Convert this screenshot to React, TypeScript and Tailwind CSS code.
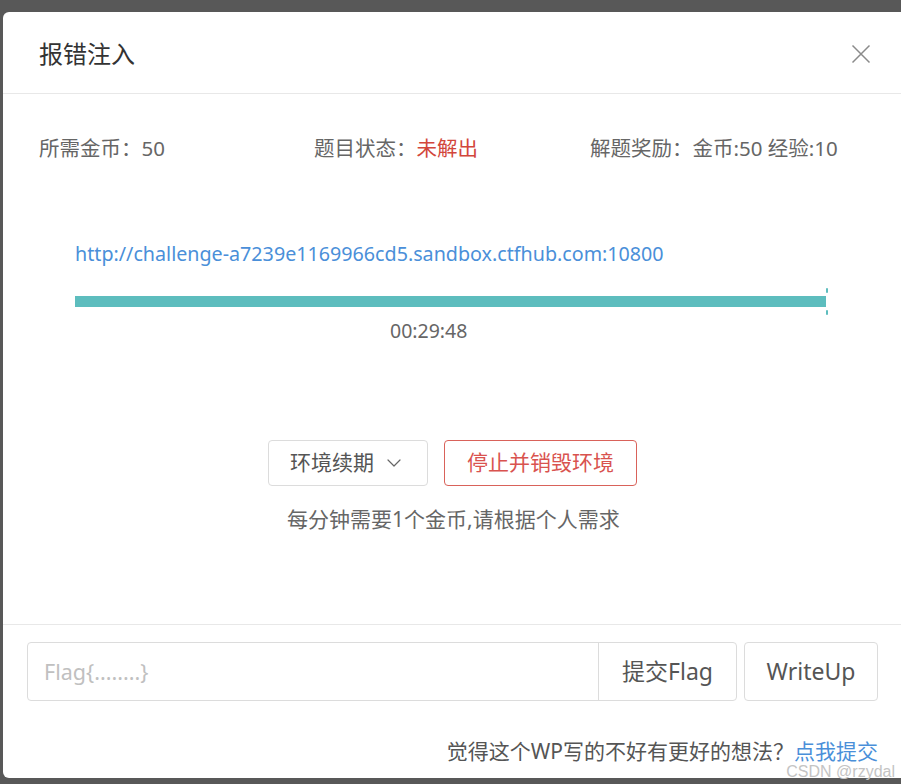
import { ChevronDown } from 'lucide-react'

const font = { fontFamily: '"Noto Sans", "Noto Sans CJK SC", sans-serif' }

function CloseIcon() {
  return (
    <svg width="20" height="20" viewBox="0 0 20 20" className="text-[#8a8a8a]">
      <path d="M1.5 1.5 L18.5 18.5 M18.5 1.5 L1.5 18.5" stroke="currentColor" strokeWidth="1.5" fill="none" />
    </svg>
  )
}

export default function App() {
  return (
    <div className="relative h-[784px] w-[901px] overflow-hidden bg-[#585858] pl-[3px] pt-[12px] pb-[6px]" style={font}>
      <div className="flex h-full w-[898px] flex-col rounded-l-[6px] bg-white">
        <header className="flex h-[82px] shrink-0 items-center justify-between border-b border-[#e8e8e8] pl-[36px] pr-[30px]">
          <h1 className="mt-[3px] text-[24px] text-[#333]">报错注入</h1>
          <button aria-label="close" className="mt-[3px]">
            <CloseIcon />
          </button>
        </header>

        <div className="flex h-[531px] shrink-0 flex-col border-b border-[#e8e8e8]">
          <div className="mt-[40px] flex h-[28px] items-center text-[20.5px] leading-[28px] text-[#666]">
            <span className="ml-[36px] w-[275px]">所需金币：50</span>
            <span className="w-[276px]">
              题目状态：<span className="text-[#d2463b]">未解出</span>
            </span>
            <span>解题奖励：金币:50 经验:10</span>
          </div>

          <a className="ml-[72px] mt-[78px] text-[19.7px] leading-[28px] text-[#4a8fd9]" href="#">
            http://challenge-a7239e1169966cd5.sandbox.ctfhub.com:10800
          </a>

          <div className="relative ml-[72px] mt-[28px] h-[11px] w-[751px] bg-[#5dbdbe]">
            <span className="absolute right-[-2px] top-[-8px] h-[5px] w-[2px] rounded-full bg-[#5dbdbe]" />
            <span className="absolute right-[-2px] top-[14px] h-[5px] w-[2px] rounded-full bg-[#5dbdbe]" />
          </div>

          <div className="ml-[387px] mt-[10px] text-[19.5px] leading-[28px] text-[#666]">00:29:48</div>

          <div className="ml-[265px] mt-[95px] flex gap-[16px]">
            <button className="flex h-[46px] w-[160px] items-center justify-center gap-[8px] rounded-[4px] border border-[#dcdcdc] text-[21px] text-[#555]">
              环境续期
              <ChevronDown size={24} strokeWidth={1.2} className="text-[#666]" />
            </button>
            <button className="h-[46px] w-[193px] rounded-[4px] border border-[#d9625a] text-[21px] text-[#d9534f]">
              停止并销毁环境
            </button>
          </div>

          <p className="ml-[284px] mt-[19px] text-[21px] leading-[28px] text-[#666]">每分钟需要1个金币,请根据个人需求</p>
        </div>

        <div className="flex flex-col">
          <div className="ml-[24px] mt-[17px] flex h-[59px] gap-[7px]">
            <div className="flex w-[710px] rounded-[4px] border border-[#dcdcdc]">
              <input
                placeholder="Flag{........}"
                className="h-full w-[570px] rounded-l-[4px] pl-[16px] text-[21.5px] text-[#555] outline-none placeholder:text-[#c0c0c0]"
              />
              <button className="flex-1 border-l border-[#dcdcdc] text-[23px] text-[#555]">提交Flag</button>
            </div>
            <button className="w-[134px] rounded-[4px] border border-[#dcdcdc] text-[23px] text-[#555]">WriteUp</button>
          </div>

          <p className="mr-[23px] mt-[39px] text-right text-[21px] leading-[22px] text-[#555]">
            觉得这个WP写的不好有更好的想法？<a href="#" className="text-[#4a8fd9]">点我提交</a>
          </p>
        </div>
      </div>

      <span className="absolute bottom-[3px] right-[6px] text-[16px] leading-[18px] text-[#c4c4c4]" style={{ fontFamily: '"Liberation Sans", sans-serif' }}>
        CSDN @rzydal
      </span>
    </div>
  )
}
